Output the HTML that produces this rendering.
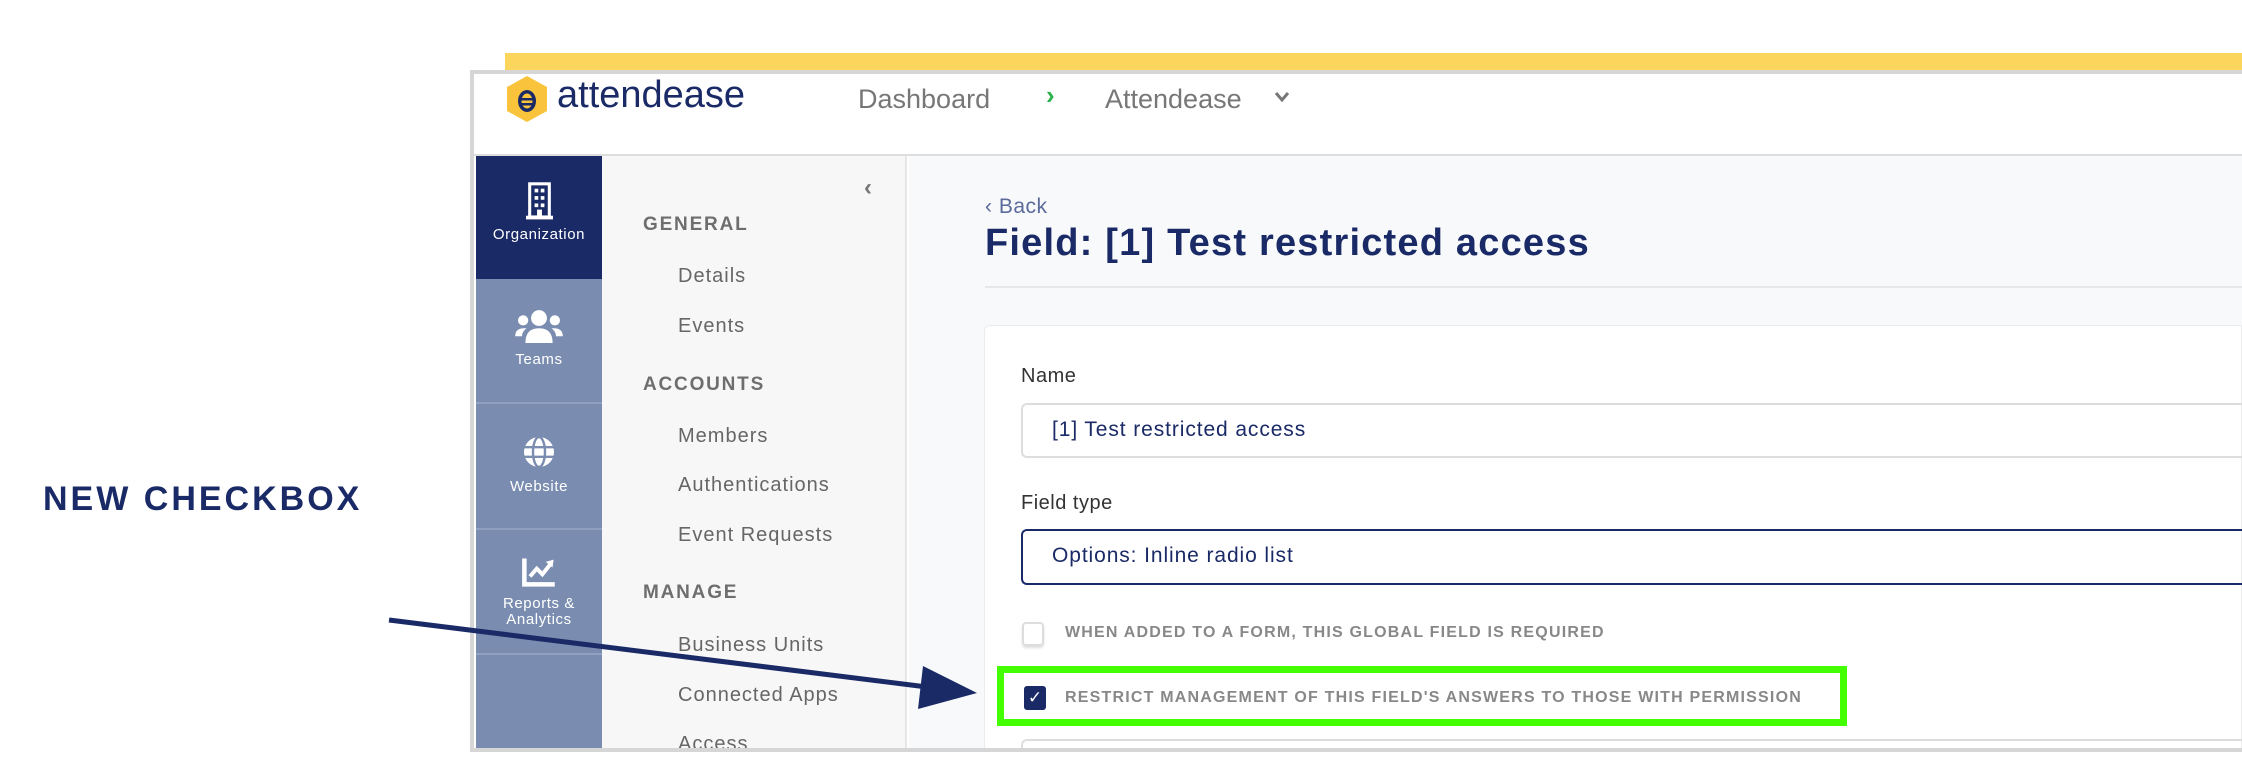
<!DOCTYPE html>
<html><head><meta charset="utf-8"><style>
*{margin:0;padding:0;box-sizing:border-box}
body{width:2242px;height:778px;background:#fff;position:relative;overflow:hidden;font-family:"Liberation Sans",sans-serif}
.a{position:absolute;white-space:nowrap}
.nav{color:#666;font-size:20px;letter-spacing:1px}
.hd{color:#6e6e6e;font-size:19px;font-weight:bold;letter-spacing:1.8px}
.side{position:absolute;left:476px;width:126px;background:#7a8db0;border-bottom:2px solid #8fa0c0;color:#fff;text-align:center;font-size:15px;letter-spacing:0.6px}
</style></head><body>
<div class="a" style="left:505px;top:53px;width:1737px;height:19px;background:#fcd65c"></div>
<div class="a" style="left:470px;top:70px;width:1780px;height:682px;border:4px solid #d6d6d6;border-right:none;background:#fff"></div>
<svg class="a" style="left:506px;top:76px" width="42" height="46" viewBox="0 0 42 46"><polygon points="21,0 41,11 41,35 21,46 1,35 1,11" fill="#f9c33b"/><ellipse cx="21" cy="25" rx="9" ry="11" fill="#1a2a66"/><ellipse cx="21" cy="25" rx="5.5" ry="7.5" fill="#f9c33b"/><rect x="15" y="22" width="12" height="2.5" fill="#1a2a66"/><rect x="15" y="27" width="12" height="2.5" fill="#1a2a66"/></svg>
<div class="a" style="left:557px;top:74px;font-size:38px;color:#1a2a66">attendease</div>
<div class="a" style="left:858px;top:84px;font-size:27px;color:#777">Dashboard</div>
<div class="a" style="left:1046px;top:80px;font-size:26px;color:#2bb24c;font-weight:bold">›</div>
<div class="a" style="left:1105px;top:84px;font-size:27px;color:#777">Attendease</div>
<svg class="a" style="left:1274px;top:91px" width="16" height="12"><path d="M2 2 L8 9 L14 2" stroke="#777" stroke-width="3" fill="none"/></svg>
<div class="a" style="left:474px;top:154px;width:1768px;height:2px;background:#ddd"></div>
<div class="a" style="left:476px;top:156px;width:126px;height:594px;background:#7a8db0"></div>
<div class="side" style="top:156px;height:123px;background:#1a2a66;border:none">
<svg style="margin-top:26px" width="27" height="38" viewBox="0 0 22 30"><rect x="3" y="1" width="16" height="27" fill="none" stroke="#fff" stroke-width="2.5"/><rect x="0" y="27" width="22" height="3" fill="#fff"/><g fill="#fff"><rect x="7" y="5" width="3" height="3"/><rect x="12" y="5" width="3" height="3"/><rect x="7" y="11" width="3" height="3"/><rect x="12" y="11" width="3" height="3"/><rect x="7" y="17" width="3" height="3"/><rect x="12" y="17" width="3" height="3"/><rect x="9" y="22" width="4" height="6"/></g></svg>
<div style="margin-top:2px">Organization</div></div>
<div class="side" style="top:279px;height:125px">
<svg style="margin-top:30px" width="48" height="34" viewBox="0 0 42 30"><g fill="#fff"><circle cx="21" cy="8" r="7"/><circle cx="7" cy="10" r="4.5"/><circle cx="35" cy="10" r="4.5"/><path d="M9 30 Q9 17 21 17 Q33 17 33 30Z"/><path d="M0 24 Q0 17 8 17 L10 17 Q6 20 6 24Z"/><path d="M42 24 Q42 17 34 17 L32 17 Q36 20 36 24Z"/></g></svg>
<div style="margin-top:4px">Teams</div></div>
<div class="side" style="top:404px;height:126px">
<svg style="margin-top:30px" width="34" height="36" viewBox="0 0 28 30"><circle cx="14" cy="15" r="12.5" fill="#fff"/><g stroke="#7a8db0" stroke-width="2" fill="none"><ellipse cx="14" cy="15" rx="5" ry="12.5"/><line x1="1" y1="11" x2="27" y2="11"/><line x1="1" y1="19" x2="27" y2="19"/></g></svg>
<div style="margin-top:4px">Website</div></div>
<div class="side" style="top:530px;height:125px">
<svg style="margin-top:26px" width="36" height="32" viewBox="0 0 32 28"><path d="M3 2 V25 H30" stroke="#fff" stroke-width="4" fill="none"/><path d="M8 18 L14 11 L19 16 L27 6" stroke="#fff" stroke-width="3.5" fill="none"/><polygon points="22,5 29,3 28,10" fill="#fff"/></svg>
<div style="margin-top:4px;line-height:16px">Reports &amp;<br>Analytics</div></div>
<div class="a" style="left:602px;top:156px;width:305px;height:594px;background:#f7f7f7;border-right:2px solid #e6e6e6"></div>
<div class="a" style="left:864px;top:174px;font-size:24px;color:#777;font-weight:bold">‹</div>
<div class="a hd" style="left:643px;top:214px">GENERAL</div>
<div class="a nav" style="left:678px;top:265px">Details</div>
<div class="a nav" style="left:678px;top:315px">Events</div>
<div class="a hd" style="left:643px;top:374px">ACCOUNTS</div>
<div class="a nav" style="left:678px;top:425px">Members</div>
<div class="a nav" style="left:678px;top:474px">Authentications</div>
<div class="a nav" style="left:678px;top:524px">Event Requests</div>
<div class="a hd" style="left:643px;top:582px">MANAGE</div>
<div class="a nav" style="left:678px;top:634px">Business Units</div>
<div class="a nav" style="left:678px;top:684px">Connected Apps</div>
<div class="a nav" style="left:678px;top:733px;height:16px;overflow:hidden">Access</div>
<div class="a" style="left:909px;top:156px;width:1333px;height:594px;background:#f8f9fa"></div>
<div class="a" style="left:985px;top:195px;font-size:21px;color:#5a6a9a;letter-spacing:0.5px">‹ Back</div>
<div class="a" style="left:985px;top:222px;font-size:38px;color:#1a2a66;font-weight:bold;letter-spacing:1.2px">Field: [1] Test restricted access</div>
<div class="a" style="left:985px;top:286px;width:1257px;height:2px;background:#e8e8e8"></div>
<div class="a" style="left:984px;top:325px;width:1258px;height:425px;background:#fff;border:1px solid #ececec;border-radius:6px 0 0 0"></div>
<div class="a" style="left:1021px;top:365px;font-size:20px;color:#333;letter-spacing:0.5px">Name</div>
<div class="a" style="left:1021px;top:403px;width:1221px;height:55px;border:2px solid #ddd;border-right:none;border-radius:6px 0 0 6px"></div>
<div class="a" style="left:1052px;top:418px;font-size:21px;color:#1a2a66;letter-spacing:0.9px">[1] Test restricted access</div>
<div class="a" style="left:1021px;top:492px;font-size:20px;color:#333;letter-spacing:0.5px">Field type</div>
<div class="a" style="left:1021px;top:529px;width:1221px;height:56px;border:2px solid #1a2a66;border-right:none;border-radius:6px 0 0 6px"></div>
<div class="a" style="left:1052px;top:544px;font-size:21px;color:#1a2a66;letter-spacing:0.9px">Options: Inline radio list</div>
<div class="a" style="left:1022px;top:622px;width:22px;height:24px;border:2px solid #ddd;border-radius:4px;box-shadow:0 2px 2px #ddd"></div>
<div class="a" style="left:1065px;top:624px;font-size:16px;color:#888;font-weight:bold;letter-spacing:1.2px">WHEN ADDED TO A FORM, THIS GLOBAL FIELD IS REQUIRED</div>
<div class="a" style="left:997px;top:666px;width:850px;height:60px;border:7px solid #44ff00"></div>
<div class="a" style="left:1024px;top:686px;width:22px;height:24px;background:#1a2a66;border-radius:3px;color:#fff;font-size:17px;text-align:center;line-height:24px">✓</div>
<div class="a" style="left:1065px;top:689px;font-size:16px;color:#888;font-weight:bold;letter-spacing:1.2px">RESTRICT MANAGEMENT OF THIS FIELD'S ANSWERS TO THOSE WITH PERMISSION</div>
<div class="a" style="left:1021px;top:739px;width:1221px;height:20px;border:2px solid #ddd;border-right:none;border-radius:6px 0 0 0"></div>
<div class="a" style="left:470px;top:748px;width:1772px;height:4px;background:#d6d6d6"></div>
<div class="a" style="left:0;top:752px;width:2242px;height:26px;background:#fff"></div>
<div class="a" style="left:43px;top:480px;font-size:34px;font-weight:bold;color:#1a2a66;letter-spacing:3px">NEW CHECKBOX</div>
<svg class="a" style="left:0;top:0" width="2242" height="778"><line x1="389" y1="620" x2="935" y2="688" stroke="#1a2a66" stroke-width="5"/><polygon points="977,693 923,666 918,709" fill="#1a2a66"/></svg>
</body></html>
